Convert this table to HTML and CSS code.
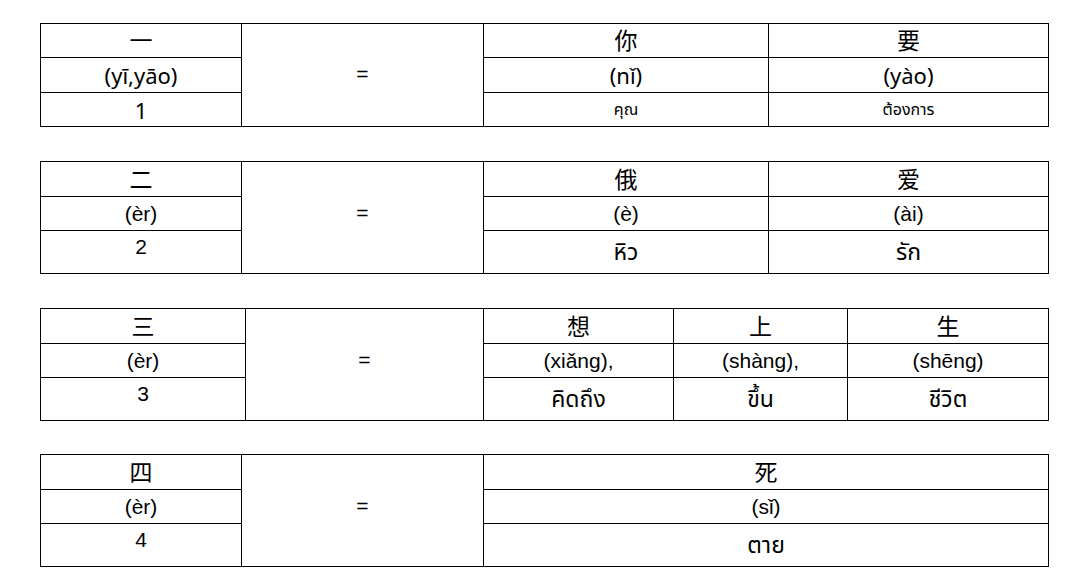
FILE: index.html
```html
<!DOCTYPE html>
<html>
<head>
<meta charset="utf-8">
<link rel="stylesheet" href="styles.css">
</head>
<body>
<div class="page">
  <table class="grid t1">
    <colgroup><col class="c201"><col class="c242"><col class="c285"><col></colgroup>
    <tr class="r34"><td class="han">一</td><td rowspan="3" class="eq">=</td><td class="han">你</td><td class="han">要</td></tr>
    <tr class="r35"><td>(yī,yāo)</td><td>(nǐ)</td><td>(yào)</td></tr>
    <tr class="r34"><td>1</td><td class="thai-sm">คุณ</td><td class="thai-sm">ต้องการ</td></tr>
  </table>

  <table class="grid t2">
    <colgroup><col class="c201"><col class="c242"><col class="c285"><col></colgroup>
    <tr class="r35"><td class="han">二</td><td rowspan="3" class="eq">=</td><td class="han">俄</td><td class="han">爱</td></tr>
    <tr class="r34"><td>(èr)</td><td>(è)</td><td>(ài)</td></tr>
    <tr class="r43"><td class="num">2</td><td class="thai">หิว</td><td class="thai">รัก</td></tr>
  </table>

  <table class="grid t2">
    <colgroup><col class="c205"><col class="c238"><col class="c190"><col class="c174"><col></colgroup>
    <tr class="r35"><td class="han">三</td><td rowspan="3" class="eq">=</td><td class="han">想</td><td class="han">上</td><td class="han">生</td></tr>
    <tr class="r34"><td>(èr)</td><td>(xiǎng),</td><td>(shàng),</td><td>(shēng)</td></tr>
    <tr class="r43"><td class="num">3</td><td class="thai">คิดถึง</td><td class="thai">ขึ้น</td><td class="thai">ชีวิต</td></tr>
  </table>

  <table class="grid t2 tight">
    <colgroup><col class="c201"><col class="c242"><col></colgroup>
    <tr class="r35"><td class="han">四</td><td rowspan="3" class="eq">=</td><td class="han">死</td></tr>
    <tr class="r34"><td>(èr)</td><td>(sǐ)</td></tr>
    <tr class="r43"><td class="num">4</td><td class="thai">ตาย</td></tr>
  </table>
</div>
</body>
</html>
```

FILE: styles.css
```css
html, body {
  margin: 0;
  padding: 0;
  background: #fff;
}

.page {
  padding: 23px 0 0 40px;
  display: flex;
  flex-direction: column;
  gap: 34px;
  align-items: flex-start;
}

.grid {
  border-collapse: collapse;
  table-layout: fixed;
  width: 1009px;
  color: #000;
}

.grid.tight {
  margin-top: -1px;
}

.grid td {
  border: 1px solid #000;
  padding: 0;
  text-align: center;
  vertical-align: middle;
  line-height: 24px;
  white-space: nowrap;
}

.t1 td {
  font-family: "Noto Sans", "Noto Sans CJK SC", sans-serif;
  font-size: 22px;
}

.t2 td {
  font-family: "Liberation Sans", Arial, "Noto Sans CJK SC", sans-serif;
  font-size: 21px;
}

.grid td.han {
  font-family: "Noto Sans CJK SC", sans-serif;
  font-size: 23px;
  padding-bottom: 3px;
}

.grid td.eq {
  font-family: "Liberation Sans", Arial, sans-serif;
  font-size: 21px;
  padding-bottom: 10px;
}

.t1 td.eq {
  padding-bottom: 2px;
}

.grid td.thai-sm {
  font-family: "Noto Sans Thai", Tahoma, "Noto Sans", sans-serif;
  font-size: 16px;
}

.grid td.thai {
  font-family: "Noto Sans Thai", Tahoma, "Noto Sans", sans-serif;
  font-size: 23px;
  font-weight: 400;
  padding-top: 1px;
}

.grid td.num {
  vertical-align: top;
  padding-top: 4px;
}

.c201 { width: 201px; }
.c242 { width: 242px; }
.c285 { width: 285px; }
.c205 { width: 205px; }
.c238 { width: 238px; }
.c190 { width: 190px; }
.c174 { width: 174px; }

.r34 { height: 34px; }
.r35 { height: 35px; }
.r43 { height: 43px; }
```
